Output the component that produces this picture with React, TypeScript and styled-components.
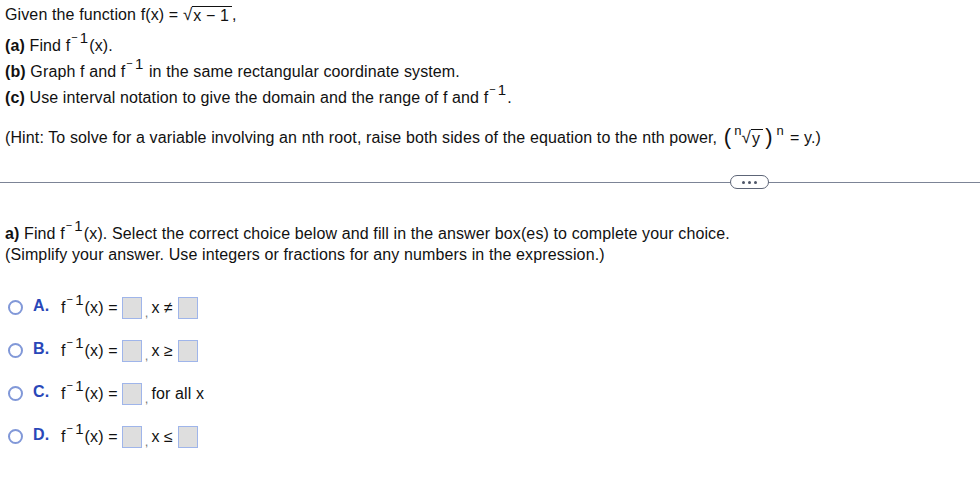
import * as React from "react";
import styled, {createGlobalStyle} from "styled-components";

const Global = createGlobalStyle`
    body {
        margin: 0;
        background: #ffffff;
        font-family: "Liberation Sans", Arial, sans-serif;
        font-size: 16px;
        letter-spacing: 0.12px;
        color: #111;
    }
`;

const Page = styled.div`
    width: 980px;
    height: 490px;
    overflow: hidden;
`;

const Intro = styled.div`
    padding: 4px 5px 0 5px;
`;

const Line = styled.div<{ $gap?: number }>`
    height: 21px;
    line-height: 21px;
    margin-top: ${p => p.$gap ?? 0}px;
    white-space: nowrap;
`;

const Sup = styled.span`
    position: relative;
    top: -8px;
    font-size: 15px;
    margin-left: 1px;
    margin-right: 1px;
    .minus {
        font-size: 11px;
        position: relative;
        top: -2px;
        margin-right: 2px;
    }
`;

const Root = styled.span`
    display: inline-flex;
    align-items: flex-end;
    .sign {
        font-size: 17px;
        line-height: 18px;
    }
    .under {
        border-top: 1px solid #111;
        padding: 0 3px 0 1px;
        line-height: 17px;
    }
`;

const BigParen = styled.span`
    font-size: 22px;
    position: relative;
    top: 1px;
    margin: 0 2px;
`;

const Index = styled.span<{ $after?: boolean }>`
    font-size: 13px;
    position: relative;
    top: -8px;
    margin-right: ${p => p.$after ? 6 : 0}px;
    margin-left: ${p => p.$after ? 2 : 1}px;
`;

const Divider = styled.div`
    margin-top: 36px;
    height: 1px;
    background: #7c8496;
    position: relative;
`;

const Pill = styled.div`
    position: absolute;
    left: 730px;
    top: -7px;
    width: 37px;
    height: 12px;
    border: 1px solid #5d6577;
    border-radius: 7px;
    background: #fff;
    display: flex;
    align-items: center;
    justify-content: center;
    gap: 3px;
    span {
        width: 3px;
        height: 3px;
        border-radius: 50%;
        background: #4e5668;
    }
`;

const Question = styled.div`
    padding: 40px 5px 0 5px;
`;

const Options = styled.div`
    padding: 31px 0 0 8px;
    display: flex;
    flex-direction: column;
    gap: 19px;
`;

const Option = styled.div`
    display: flex;
    align-items: center;
    height: 24px;
    white-space: nowrap;
`;

const Radio = styled.span`
    width: 11px;
    height: 11px;
    border: 2px solid #8198d8;
    border-radius: 50%;
    margin-right: 10px;
    position: relative;
    top: -1px;
`;

const Letter = styled.span`
    font-weight: bold;
    color: #2947b8;
    width: 28px;
    position: relative;
    top: -2px;
`;

const Box = styled.span`
    display: inline-block;
    width: 18px;
    height: 20px;
    background: #dedede;
    border: 1px solid #9fb5ea;
    margin: 0 3px 0 4px;
`;

const Rest = styled.span`
    margin-right: 1px;
    color: #111;
`;

const Comma = styled.span`
    color: #777;
    font-size: 13px;
    position: relative;
    top: 4px;
    margin-right: 3px;
`;

const FInv = () => <span>f<Sup><span className="minus">−</span>1</Sup></span>;

const options = [
    {letter: "A.", tail: "x ≠", box: true},
    {letter: "B.", tail: "x ≥", box: true},
    {letter: "C.", tail: "for all x", box: false},
    {letter: "D.", tail: "x ≤", box: true},
];

export default function App() {
    return <Page>
        <Global/>
        <Intro>
            <Line>Given the function f(x) = <Root><span className="sign">√</span><span className="under">x − 1</span></Root>,</Line>
            <Line $gap={10}><b>(a)</b> Find <FInv/>(x).</Line>
            <Line $gap={5}><b>(b)</b> Graph f and <FInv/> in the same rectangular coordinate system.</Line>
            <Line $gap={5}><b>(c)</b> Use interval notation to give the domain and the range of f and <FInv/>.</Line>
            <Line $gap={17}>(Hint: To solve for a variable involving an nth root, raise both sides of the equation to the nth power, <BigParen>(</BigParen><Index>n</Index><Root><span className="sign">√</span><span className="under">y</span></Root><BigParen>)</BigParen><Index $after>n</Index>= y.)</Line>
        </Intro>
        <Divider><Pill><span/><span/><span/></Pill></Divider>
        <Question>
            <Line><b>a)</b> Find <FInv/>(x). Select the correct choice below and fill in the answer box(es) to complete your choice.</Line>
            <Line>(Simplify your answer. Use integers or fractions for any numbers in the expression.)</Line>
        </Question>
        <Options>
            {options.map(o => <Option key={o.letter}>
                <Radio/>
                <Letter>{o.letter}</Letter>
                <FInv/>(x) = <Box/>
                <Comma>,</Comma>
                <Rest>{o.tail}</Rest>
                {o.box && <Box/>}
            </Option>)}
        </Options>
    </Page>;
}
